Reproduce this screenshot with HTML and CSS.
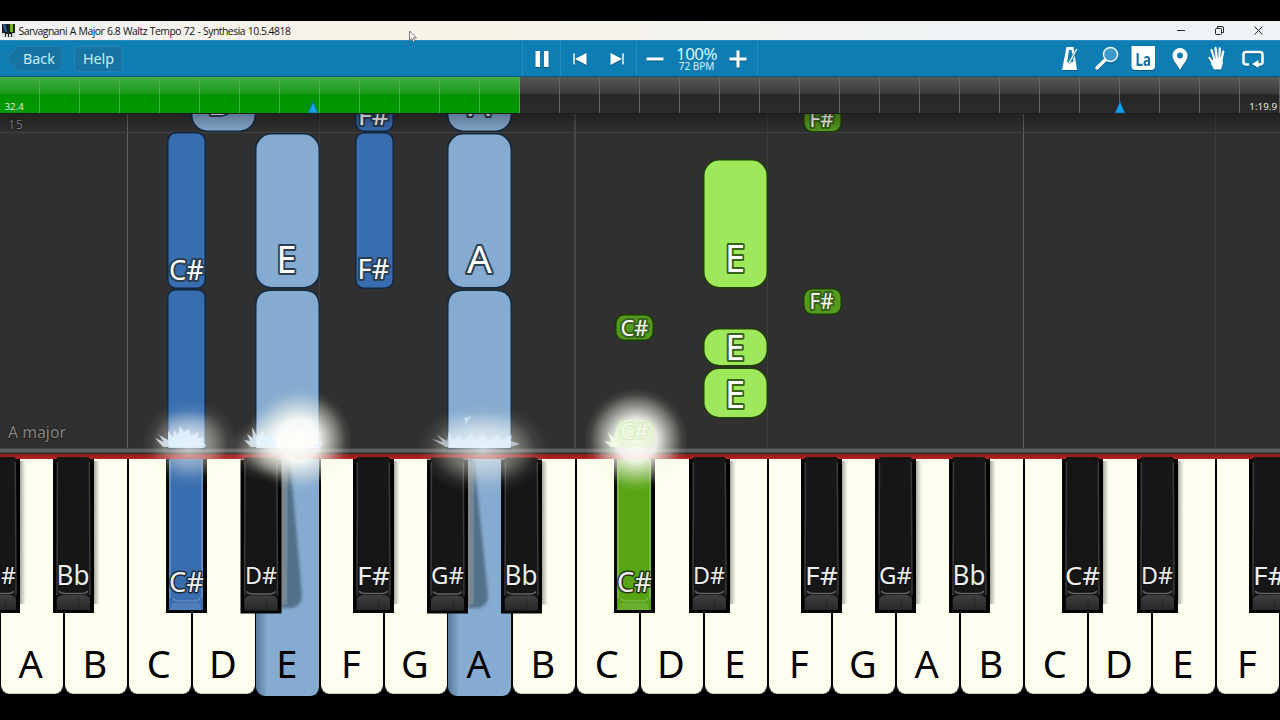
FILE: index.html
```html
<!DOCTYPE html>
<html lang="en">
<head>
<meta charset="utf-8">
<title>Synthesia</title>
<link rel="stylesheet" href="styles.css">
</head>
<body>
<div class="window">
  <header class="titlebar">
    <svg class="app-icon" width="13" height="13" viewBox="0 0 13 13"><rect width="13" height="13" fill="#18211f"/><path d="M1 0h2l2 8H3z" fill="#3262a4"/><path d="M8 0h3v8H8z" fill="#6fae36"/><path d="M0 9h3v4H0zM4 10h2v3H4zM7 10h2v3H7zM10 9h3v4h-3z" fill="#d5dad4"/></svg>
    <span class="title">Sarvagnani A Major 6.8 Waltz Tempo 72 - Synthesia 10.5.4818</span>
    <svg class="win-controls" width="100" height="19" viewBox="0 0 100 19" fill="none" stroke="#222" stroke-width="1"><path d="M7 9.500h8"/><rect x="45.500" y="7.500" width="6" height="6" rx="1"/><path d="M47.500 7.500v-2h4.500q1.500 0 1.500 1.500v4.500h-2"/><path d="M84.500 5.500l8 8M92.500 5.500l-8 8"/></svg>
  </header>
  <nav class="toolbar">
    <div class="left-tools">
      <div class="back"><svg width="57" height="28" viewBox="0 0 57 28"><path d="M.8 13.500L10 3Q12 1 15 1H52Q56 1 56 5V22Q56 26 52 26H15Q12 26 10 24Z" fill="#1673a4" stroke="#2583b2"/></svg><span>Back</span></div>
      <div class="help">Help</div>
    </div>
    <div class="transport">
      <div class="cell pause"><svg width="14" height="16" viewBox="0 0 14 16"><path d="M.5 0h4.500v16H.5zM9 0h4.500v16H9z" fill="#fff"/></svg></div>
      <div class="cell skips">
        <svg width="14" height="12" viewBox="0 0 14 12"><path d="M1 .5v11" stroke="#fff" stroke-width="1.500"/><path d="M13.500 0v12L2 6z" fill="#fff"/></svg>
        <svg width="14" height="12" viewBox="0 0 14 12"><path d="M13 .5v11" stroke="#fff" stroke-width="1.500"/><path d="M.5 0v12L12 6z" fill="#fff"/></svg>
      </div>
      <div class="cell speed">
        <svg width="18" height="18" viewBox="0 0 18 18"><path d="M.5 9h17" stroke="#fff" stroke-width="3"/></svg>
        <div class="tempo"><span class="pct">100%</span><span class="bpm">72 BPM</span></div>
        <svg width="18" height="18" viewBox="0 0 18 18"><path d="M.5 9h17M9 .5v17" stroke="#fff" stroke-width="3"/></svg>
      </div>
    </div>
    <svg class="right-tools" width="220" height="36" viewBox="1060 41 220 36">
      <path d="M1062 70L1066.500 47H1073.500L1077 70Z" fill="#fff"/><path d="M1067.200 62L1069 50H1071.500L1073.500 62Z" fill="#0e7db3"/><path d="M1068.500 63L1077 50" stroke="#0e7db3" stroke-width="3"/><path d="M1069 63L1076.800 49" stroke="#fff" stroke-width="1.300"/>
      <circle cx="1110.500" cy="54.500" r="7" fill="#3e9ac9" stroke="#eef8fb" stroke-width="1.500"/><path d="M1105 60L1097 68" stroke="#fff" stroke-width="3.500" stroke-linecap="round"/>
      <path d="M1131.500 46H1155V66Q1155 70 1151 70H1135.500Q1131.500 70 1131.500 66Z" fill="#fff"/><text class="la" x="1135.500" y="65.500" textLength="15.500" lengthAdjust="spacingAndGlyphs">La</text>
      <path d="M1180 70C1177 64 1172.500 60.500 1172.500 55.500A7.500 7.500 0 0 1 1187.500 55.500C1187.500 60.500 1183 64 1180 70Z" fill="#fff"/><circle cx="1180" cy="55.500" r="3" fill="#0e7db3"/>
      <path d="M1214 65L1209.500 58M1215 61L1211.500 50M1217 60L1215.500 48M1219.300 60L1219.800 48.500M1221.200 61L1223.300 51.500" stroke="#fff" stroke-width="2.300" stroke-linecap="round" fill="none"/><path d="M1213 59H1222L1223 63 1221 69.500H1214L1211 64Z" fill="#fff"/>
      <path d="M1249 64.500H1246Q1243.500 64.500 1243.500 62V54.500Q1243.500 52 1246 52H1260Q1262.500 52 1262.500 54.500V62Q1262.500 64.500 1260 64.500H1257" fill="none" stroke="#fff" stroke-width="2.600"/><path d="M1252 64L1258.500 60V68Z" fill="#fff"/>
    </svg>
  </nav>
  <div class="progress">
    <div class="played"></div>
    <div class="ticks"></div>
    <span class="time">32.4</span><span class="time">1:19.9</span>
    <svg class="marks" width="1280" height="37" viewBox="0 77 1280 37"><path d="M313 101.500L318 113H308ZM1120 101.500L1125 113H1115Z" fill="#13a1ec" stroke="#145781" stroke-width=".6"/></svg>
  </div>
  <main class="stage">
    <div class="roll"></div>
    <div class="rail"></div>
    <div class="felt"></div>
    <div class="keys">
      <div class="key">A</div><div class="key">B</div><div class="key">C</div><div class="key">D</div><div class="key down">E</div><div class="key">F</div><div class="key">G</div><div class="key down">A</div><div class="key">B</div><div class="key">C</div><div class="key">D</div><div class="key">E</div><div class="key">F</div><div class="key">G</div><div class="key">A</div><div class="key">B</div><div class="key">C</div><div class="key">D</div><div class="key">E</div><div class="key">F</div>
    </div>
    <svg class="canvas" width="1280" height="586" viewBox="0 114 1280 586">
      <defs>
        <linearGradient id="shade"><stop offset="0" stop-color="#83837a" stop-opacity=".75"/><stop offset=".5" stop-color="#aaa99f" stop-opacity=".4"/><stop offset="1" stop-color="#fffff0" stop-opacity="0"/></linearGradient>
        <linearGradient id="top" x2="0" y2="1"><stop offset="0" stop-color="#000" stop-opacity=".3"/><stop offset="1" stop-color="#000" stop-opacity="0"/></linearGradient>
        <linearGradient id="cap" x2="0" y2="1"><stop offset="0" stop-color="#3f3f3f"/><stop offset="1" stop-color="#272727"/></linearGradient>
        <linearGradient id="base" x2="0" y2="1"><stop offset="0" stop-color="#dcefff" stop-opacity="0"/><stop offset="1" stop-color="#e4f3ff" stop-opacity=".75"/></linearGradient>
        <radialGradient id="glow"><stop offset="0" stop-color="#fffffb"/><stop offset=".4" stop-color="#fffffa" stop-opacity=".9"/><stop offset=".7" stop-color="#f4f4e8" stop-opacity=".42"/><stop offset=".88" stop-color="#f0f0e4" stop-opacity=".1"/><stop offset="1" stop-color="#f0f0e4" stop-opacity="0"/></radialGradient>
        <radialGradient id="haze"><stop offset="0" stop-color="#f6fbff" stop-opacity=".75"/><stop offset=".5" stop-color="#f4f4ec" stop-opacity=".38"/><stop offset=".8" stop-color="#f0f0e4" stop-opacity=".08"/><stop offset="1" stop-color="#f0f0e4" stop-opacity="0"/></radialGradient>
        <filter id="soft" x="-50%" width="200%"><feGaussianBlur stdDeviation="1.800"/></filter>
        <filter id="faint" x="-10%" y="-20%" width="120%" height="140%"><feGaussianBlur stdDeviation=".6"/></filter>
        <g id="black">
          <path d="M41 4H48L47 147H41Z" fill="url(#shade)"/>
          <path d="M0 2H41V156H0Z" fill="#030303"/>
          <path d="M3.500 3Q3.500 0 6 0H34Q37 0 37 3V153H3.500Z" fill="#161616"/>
          <path d="M4.500 5L4 138M36.300 5L37 138" stroke="#3b3b3b" stroke-width="1.500"/>
          <path d="M4 153V142Q6 138 12 138H30Q35 138 37 142V153Z" fill="url(#cap)"/>
          <path d="M6 134Q8 136.500 12 136.500H29Q33 136.500 35 134" fill="none" stroke="#626262" stroke-width="1.300"/>
          <path d="M26 141V153" stroke="#242424"/>
        </g>
        <g id="lit">
          <path d="M0 2H41V156H0Z" fill="#030303"/>
          <path d="M3 2H37V153H3Z" fill="currentColor"/>
          <path d="M4 3V141M36 3V141" stroke="#fff" stroke-opacity=".28" stroke-width="1.400"/>
          <path d="M7 141Q8 144 13 144H29Q33 144 34 141" fill="none" stroke="#fff" stroke-opacity=".2" stroke-width="1.500"/>
          <path d="M4 153L7 146H33L36 153Z" fill="#fff" fill-opacity=".12"/>
        </g>
      </defs>
      <path d="M127.500 114V448M575 114V448M1023.500 114V448" stroke="#626262"/>
      <path d="M319.500 114V448M767.500 114V448M1215.500 114V448" stroke="#3d3d3d"/>
      <path d="M0 132.500H1280" stroke="#414141"/>
      <text class="hint" x="8" y="129" textLength="15">15</text>
      <text class="hint big" x="8" y="438" textLength="58" lengthAdjust="spacingAndGlyphs">A major</text>

      <g class="note light"><rect x="192.500" y="90" width="62" height="40.500" rx="15"/><rect x="448.500" y="90" width="62" height="40.500" rx="15"/><rect x="256.500" y="134.500" width="62" height="152.500" rx="15"/><rect x="448.500" y="134.500" width="62" height="152.500" rx="15"/><path d="M256.500 448V306Q256.500 291 271.500 291H303.500Q318.500 291 318.500 306V448ZM448.500 448V306Q448.500 291 463.500 291H495.500Q510.500 291 510.500 306V448Z"/></g>
      <g class="note dark"><rect x="356.500" y="90" width="36" height="40.500" rx="8"/><rect x="168.500" y="133.500" width="36" height="154" rx="8"/><rect x="356.500" y="133.500" width="36" height="154" rx="8"/><path d="M168.500 448V298Q168.500 290.500 176.500 290.500H196.500Q204.500 290.500 204.500 298V448Z"/></g>
      <g class="note lime"><rect x="704.500" y="160.500" width="62" height="126.500" rx="15"/><rect x="704.500" y="329.500" width="62" height="35.500" rx="15"/><rect x="704.500" y="369" width="62" height="48" rx="15"/></g>
      <g class="note green"><rect x="804.500" y="100" width="36" height="31" rx="8"/><rect x="804.500" y="289.500" width="36" height="24" rx="8"/><rect x="616.500" y="315.500" width="36" height="24" rx="8"/><rect x="616.500" y="420.500" width="36" height="27" rx="8"/></g>
      <g class="tag blue" text-anchor="middle">
        <text x="221" y="115" font-size="38">D</text><text x="373.500" y="125" font-size="26" textLength="31" lengthAdjust="spacingAndGlyphs">F#</text><text x="479" y="116" font-size="34">A</text>
        <text x="186.500" y="279.500" font-size="27" textLength="35" lengthAdjust="spacingAndGlyphs">C#</text><text x="286.500" y="272.500" font-size="39" textLength="20" lengthAdjust="spacingAndGlyphs">E</text><text x="373.500" y="279" font-size="27" textLength="32" lengthAdjust="spacingAndGlyphs">F#</text><text x="479.500" y="272.500" font-size="39">A</text>
      </g>
      <g class="tag leaf" text-anchor="middle">
        <text x="735" y="272" font-size="39" textLength="20" lengthAdjust="spacingAndGlyphs">E</text><text x="735" y="359.500" font-size="34">E</text><text x="735" y="407.500" font-size="39" textLength="20" lengthAdjust="spacingAndGlyphs">E</text>
        <text x="821.500" y="127" font-size="21.500" textLength="24" lengthAdjust="spacingAndGlyphs">F#</text><text x="821.500" y="309" font-size="21.500" textLength="24" lengthAdjust="spacingAndGlyphs">F#</text><text x="634.500" y="335.500" font-size="22" textLength="28">C#</text>
      </g>
      <path d="M0 114H1280V133H0Z" fill="url(#top)"/>
      <path d="M168.500 412H204.500V448H168.500ZM256.500 412H318.500V448H256.500ZM448.500 412H510.500V448H448.500Z" fill="url(#base)"/>

      <g filter="url(#soft)" fill="#526f89"><path d="M281 459H290L302 595Q302 606 292 608H281Z"/><path d="M468 459H474L488 595Q488 606 479 608H468Z"/></g>
      <use href="#black" x="-21" y="457"/><use href="#black" x="53" y="457"/><use href="#black" x="240.500" y="457.500"/><use href="#black" x="353" y="457"/><use href="#black" x="427" y="457.500"/><use href="#black" x="501" y="457.500"/><use href="#black" x="689" y="457"/><use href="#black" x="801" y="457"/><use href="#black" x="875" y="457"/><use href="#black" x="949" y="457"/><use href="#black" x="1062" y="457"/><use href="#black" x="1137" y="457"/><use href="#black" x="1249" y="457"/>
      <use href="#lit" x="166" y="457" color="#386daf"/><use href="#lit" x="614" y="457" color="#57a414"/>
      <g class="name" text-anchor="middle">
        <text x="0" y="584" font-size="24" textLength="32" lengthAdjust="spacingAndGlyphs">G#</text><text x="73" y="585" font-size="27" textLength="33" lengthAdjust="spacingAndGlyphs">Bb</text><text x="186.500" y="592" font-size="27" textLength="35" lengthAdjust="spacingAndGlyphs">C#</text><text x="261" y="583.500" font-size="24" textLength="32" lengthAdjust="spacingAndGlyphs">D#</text><text x="373.500" y="584.500" font-size="26" textLength="33" lengthAdjust="spacingAndGlyphs">F#</text><text x="447.500" y="583.500" font-size="24" textLength="33" lengthAdjust="spacingAndGlyphs">G#</text><text x="521" y="585" font-size="27" textLength="33" lengthAdjust="spacingAndGlyphs">Bb</text><text x="634.500" y="592" font-size="27" textLength="35" lengthAdjust="spacingAndGlyphs">C#</text><text x="709" y="583.500" font-size="24" textLength="32" lengthAdjust="spacingAndGlyphs">D#</text><text x="821.500" y="584.500" font-size="26" textLength="33" lengthAdjust="spacingAndGlyphs">F#</text><text x="895.500" y="583.500" font-size="24" textLength="33" lengthAdjust="spacingAndGlyphs">G#</text><text x="969" y="585" font-size="27" textLength="33" lengthAdjust="spacingAndGlyphs">Bb</text><text x="1082.500" y="584.500" font-size="26" textLength="35" lengthAdjust="spacingAndGlyphs">C#</text><text x="1157" y="583.500" font-size="24" textLength="32" lengthAdjust="spacingAndGlyphs">D#</text><text x="1269.500" y="584.500" font-size="26" textLength="33" lengthAdjust="spacingAndGlyphs">F#</text>
      </g>

      <ellipse cx="190" cy="444" rx="48" ry="44" fill="url(#haze)"/>
      <ellipse cx="272" cy="450" rx="46" ry="32" fill="url(#haze)"/>
      <ellipse cx="483" cy="449" rx="66" ry="46" fill="url(#haze)"/>
      <ellipse cx="299" cy="440" rx="53" ry="52" fill="url(#glow)"/>
      <ellipse cx="636" cy="440" rx="52" ry="52" fill="url(#glow)"/>
      <g fill="#e4f4ff" fill-opacity=".8" filter="url(#faint)">
        <path d="M163 447L155 438 164 442 159 435 168 440 168 431 173 437 174 430 178 435 180 426 184 432 189 429 191 436 199 432 197 439 204 437 202 442 207 446Z"/>
        <path d="M251 447L244 440 250 441 247 434 253 438 252 427 257 436 263 431 265 437 272 433 277 446ZM312 446L323 441 320 447Z"/>
        <path d="M446 447L432 439 443 442 437 435 447 441 449 431 453 440 459 435 463 441 471 433 475 440 484 435 489 441 498 434 502 440 512 435 511 441 520 444 510 447ZM464 418L471 416 466 424Z" fill-opacity=".6"/>
      </g>
      <path d="M611 447L604 441 611 442 608 432 614 438 616 430 622 447Z" fill="#f0fbe4" fill-opacity=".9"/>
      <g class="fade"><rect x="617" y="421" width="37" height="26" rx="8"/><text x="634.500" y="439" font-size="22" text-anchor="middle" textLength="28">C#</text></g>
    </svg>
  </main>
</div>
<svg class="cursor" width="10" height="14" viewBox="0 0 10 14"><path d="M1.500 1V10.500L3.800 8.500 5.200 12 7 11.200 5.400 7.900H8.400Z" fill="#fff" stroke="#555" stroke-width=".8"/></svg>
</body>
</html>
```

FILE: styles.css
```css
* { box-sizing: border-box; }
body { margin: 0; width: 1280px; height: 720px; overflow: hidden; background: #000; font-family: "Noto Sans", "Open Sans", sans-serif; }
.window { padding-top: 21px; display: flex; flex-direction: column; }

.titlebar { height: 19px; display: flex; align-items: center; padding: 0 12px 0 2px; background: linear-gradient(90deg, #f2f2f4, #f8f3e9 25%, #f8f3e9 40%, #eef3f5 75%); color: #111; }
.title { margin-left: 3.5px; font-family: "Open Sans", sans-serif; font-size: 10.4px; line-height: 19px; padding-top: 1px; white-space: nowrap; letter-spacing: -0.49px; word-spacing: 0.5px; }
.win-controls { margin-left: auto; margin-right: -2px; }
.cursor { position: absolute; left: 408px; top: 30px; }

.toolbar { height: 37px; display: flex; position: relative; background: #0e7db3; border-bottom: 1px solid #0b537a; border-top: 1px solid #2a8ab9; }
.left-tools { width: 522px; display: flex; align-items: center; padding-left: 6px; gap: 11px; color: #c8eefa; font-size: 14.3px; }
.back { width: 57px; height: 28px; display: grid; }
.back svg, .back span { grid-area: 1 / 1; }
.back span { padding-left: 17px; line-height: 27px; }
.help { width: 49px; height: 26px; line-height: 23px; text-align: center; border: 1px solid #2583b2; border-radius: 4px; background: #1673a4; }
.transport { display: flex; width: 236px; border-right: 1px solid #298db9; }
.cell { display: flex; align-items: center; border-left: 1px solid #298db9; }
.cell svg { filter: drop-shadow(0 1px 0.5px #075781); flex: none; }
.pause { width: 38px; justify-content: center; }
.skips { width: 76px; padding: 0 12px; justify-content: space-between; }
.speed { flex: 1; padding: 0 10px 0 9px; justify-content: space-between; }
.tempo { display: flex; flex-direction: column; align-items: center; color: #d7f4fc; white-space: nowrap; }
.pct { font-size: 17px; line-height: 15px; letter-spacing: -0.6px; }
.bpm { font-size: 10px; line-height: 10px; }
.right-tools { margin-left: auto; filter: drop-shadow(0 1px 0.5px #075781); }
.la { font-size: 17px; font-weight: 700; fill: #1671a0; }

.progress { height: 37px; display: flex; justify-content: space-between; align-items: flex-end; position: relative; background: linear-gradient(#575757, #3a3a3a 46%, #262626 50%, #2b2b2b); border-bottom: 1px solid #1c1c1c; }
.played { position: absolute; left: 0; top: 0; width: 520px; height: 36px; background: linear-gradient(#42ae42, #1a991a 46%, #009300 50%, #009800); }
.ticks { position: absolute; inset: 0; background: repeating-linear-gradient(90deg, transparent 0 39px, rgba(220, 240, 220, .3) 39px 40px); -webkit-mask-image: linear-gradient(rgba(0, 0, 0, .3), #000 60%); mask-image: linear-gradient(rgba(0, 0, 0, .3), #000 60%); }
.marks { position: absolute; left: 0; top: 0; }
.time { position: relative; padding: 0 3px 0 4.5px; font-size: 9.8px; line-height: 13px; color: #e1ebe1; }

.stage { position: relative; display: flex; flex-direction: column; }
.roll { height: 334px; background: #303030; }
.rail { height: 6px; background: linear-gradient(#373737, #666 35%, #5a5a5a 65%, #1c1c1c); }
.felt { height: 5px; background: linear-gradient(#8d1c1a, #b12624); }
.keys { display: flex; height: 237px; background: #000; }
.key { width: 64px; height: 235px; padding: 182px 2.5px 0 0; border-left: 1px solid #000; border-right: 1.5px solid #000; border-radius: 0 0 9px 9px; background: #fffff0; text-align: center; font-size: 38px; line-height: 44px; color: #000; box-shadow: inset 0 -1px #d0d0c4; }
.key.down { height: 237px; border-left-color: #5b7c9e; background: linear-gradient(90deg, #5b7c9e, #86abd0 17%); box-shadow: none; }
.canvas { position: absolute; left: 0; top: 0; }

.hint { font-size: 12.5px; fill: #858585; stroke: #1b1b1b; stroke-width: 1.5px; paint-order: stroke; }
.big { font-size: 15.5px; }
.note { stroke-width: 3px; paint-order: stroke; }
.light { fill: #86abd0; stroke: #132a40; }
.dark { fill: #386daf; stroke: #102641; }
.lime { fill: #a0e85b; stroke: #214008; }
.green { fill: #55991e; stroke: #193c04; }
.tag text { fill: #fff; stroke-width: 4px; stroke-linejoin: round; paint-order: stroke; }
.tag.blue text { stroke: #2b3f53; }
.tag.leaf text { stroke: #37621b; }
.name { fill: #eee; stroke: #111; stroke-opacity: .75; stroke-width: 3px; stroke-linejoin: round; paint-order: stroke; }
.fade rect { fill: #d9f0bd; fill-opacity: .4; }
.fade text { fill: #fff; fill-opacity: .8; stroke: #c3dfa3; stroke-opacity: .5; stroke-width: 2px; paint-order: stroke; }
```
